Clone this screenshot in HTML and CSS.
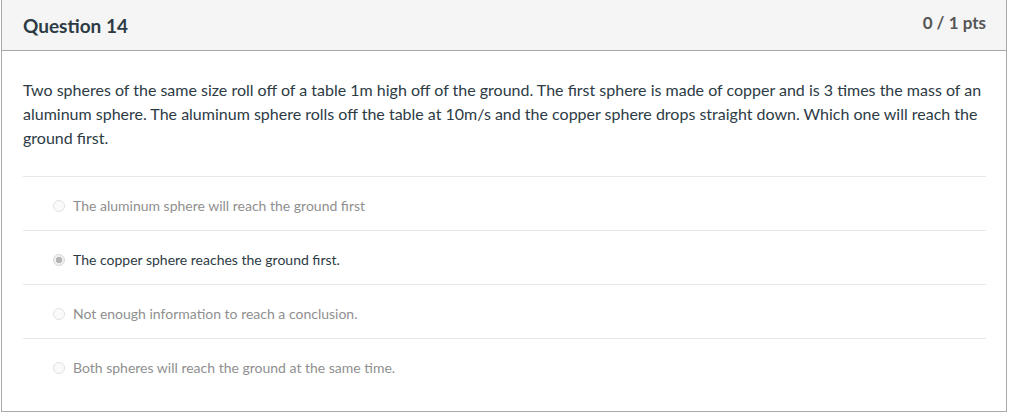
FILE: index.html
```html
<!DOCTYPE html>
<html>
<head>
<meta charset="utf-8">
<link rel="stylesheet" href="styles.css">
</head>
<body>
<div class="quiz">
  <div class="header">
    <h2 class="title">Question 14</h2>
    <div class="pts">0 / 1 pts</div>
  </div>
  <div class="content">
    <p class="text">Two spheres of the same size roll off of a table 1m high off of the ground. The first sphere is made of copper and is 3 times the mass of an aluminum sphere. The aluminum sphere rolls off the table at 10m/s and the copper sphere drops straight down. Which one will reach the ground first.</p>
    <div class="answers">
      <div class="answer"><span class="radio"></span><span class="label">The aluminum sphere will reach the ground first</span></div>
      <div class="answer selected"><span class="radio"></span><span class="label">The copper sphere reaches the ground first.</span></div>
      <div class="answer"><span class="radio"></span><span class="label">Not enough information to reach a conclusion.</span></div>
      <div class="answer"><span class="radio"></span><span class="label">Both spheres will reach the ground at the same time.</span></div>
    </div>
  </div>
</div>
</body>
</html>
```
FILE: styles.css
```css
html, body {
  margin: 0;
  padding: 0;
  background: #fff;
}
body {
  font-family: Lato, "Open Sans", sans-serif;
  color: #2d3b45;
}
.quiz {
  margin: 0 2px 0 1px;
  border: 1px solid #a9a9a9;
  border-top: none;
  height: 412px;
  box-sizing: border-box;
}
.header {
  display: flex;
  justify-content: space-between;
  align-items: center;
  height: 51px;
  box-sizing: border-box;
  padding: 0 20px 0 21px;
  background: #f5f5f5;
  border-bottom: 1px solid #a9a9a9;
}
.title {
  margin: 0;
  font-size: 19px;
  font-weight: 700;
  color: #2d3b45;
}
.pts {
  font-size: 17px;
  font-weight: 700;
  color: #555;
  margin-top: -5px;
}
.content {
  padding: 27px 20px 0 21px;
}
.text {
  margin: 0 0 26px;
  font-size: 16px;
  line-height: 24px;
  color: #2d3b45;
}
.answer {
  display: flex;
  align-items: center;
  height: 54px;
  border-top: 1px solid #e8e8e8;
  box-sizing: border-box;
  padding: 4px 0 0 30px;
}
.radio {
  width: 12px;
  height: 12px;
  border-radius: 50%;
  border: 1px solid #e2e2e2;
  background: #fafafa;
  box-sizing: border-box;
  margin-right: 8px;
}
.selected .radio {
  border: 1px solid #d8d8d8;
  background: radial-gradient(circle, #b5b5b5 0 3px, #f0f0f0 3.5px);
}
.label {
  font-size: 14px;
  color: #8f8f8f;
}
.selected .label {
  color: #2d3b45;
}
```
